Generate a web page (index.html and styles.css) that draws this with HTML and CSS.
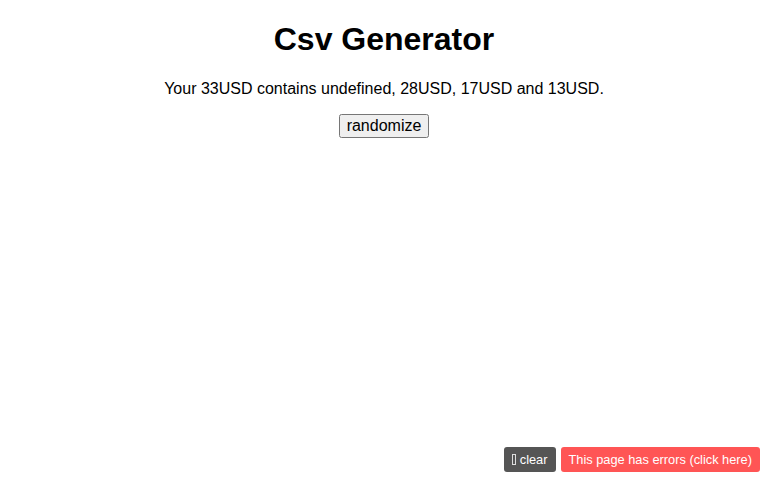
FILE: index.html
```html
<!DOCTYPE html>
<html>
<head>
<meta charset="utf-8">
<link rel="stylesheet" href="styles.css">
</head>
<body>
<h1 class="title">Csv Generator</h1>
<p class="summary">Your 33USD contains undefined, 28USD, 17USD and 13USD.</p>
<div class="actions"><button class="randomize">randomize</button></div>
<div class="error-bar">
  <button class="btn-clear"><span class="tofu"></span> clear</button>
  <button class="btn-errors">This page has errors (click here)</button>
</div>
</body>
</html>
```
FILE: styles.css
```css
body {
  margin: 0 8px;
  font-family: "Liberation Sans", Arial, sans-serif;
  text-align: center;
  background: #fff;
  color: #000;
}
.title {
  font-size: 2em;
  margin: 0.67em 0;
}
.summary {
  font-size: 16px;
  margin: 16px 0;
}
.randomize {
  font-family: "Liberation Sans", Arial, sans-serif;
  font-size: 16px;
}
.error-bar {
  position: fixed;
  right: 8px;
  bottom: 8px;
  display: flex;
  gap: 5px;
}
.error-bar button {
  font-family: "Liberation Sans", Arial, sans-serif;
  font-size: 12.8px;
  color: #fff;
  border: none;
  border-radius: 3px;
  height: 25px;
  padding: 0 8px;
  line-height: 25px;
}
.btn-clear {
  background: #555;
}
.btn-errors {
  background: #f55;
}
.tofu {
  display: inline-block;
  width: 2px;
  height: 9px;
  border: 1px solid #ddd;
  vertical-align: -1px;
}
```
